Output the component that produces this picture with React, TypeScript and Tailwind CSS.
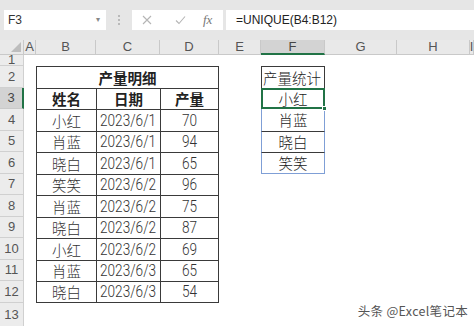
import React from "react";

const cols = ["A", "B", "C", "D", "E", "F", "G", "H", "I"];
const rowHeights = [11, 22, 21, 22, 21, 22, 21, 22, 21, 22, 21, 22, 24];

const data: [string, string, string][] = [
  ["小红", "2023/6/1", "70"],
  ["肖蓝", "2023/6/1", "94"],
  ["晓白", "2023/6/1", "65"],
  ["笑笑", "2023/6/2", "96"],
  ["肖蓝", "2023/6/2", "75"],
  ["晓白", "2023/6/2", "87"],
  ["小红", "2023/6/2", "69"],
  ["肖蓝", "2023/6/3", "65"],
  ["晓白", "2023/6/3", "54"],
];
const uniq = ["小红", "肖蓝", "晓白", "笑笑"];

const cjk = "font-['Noto_Sans_CJK_SC',sans-serif] font-light";
const cjkBold = "font-['Noto_Sans_CJK_SC',sans-serif] font-bold";

export default function App() {
  const gridRows = `15px ${rowHeights.map((h) => h + "px").join(" ")}`;
  return (
    <div className="w-[474px] h-[326px] overflow-hidden bg-white flex flex-col font-['Liberation_Sans',sans-serif]">
      {/* formula bar */}
      <div className="h-[40px] bg-[#e6e6e6] flex items-center shrink-0">
        <div className="ml-[4px] w-[102px] h-[20px] bg-white flex items-center justify-between px-[4px]">
          <span className="text-[12px] text-[#333]">F3</span>
          <span className="text-[8px] text-[#888] mr-[2px]">▾</span>
        </div>
        <div className="w-[26px] flex flex-col items-center gap-[2px]">
          <span className="w-[2px] h-[2px] bg-[#aaa] rounded-full" />
          <span className="w-[2px] h-[2px] bg-[#aaa] rounded-full" />
          <span className="w-[2px] h-[2px] bg-[#aaa] rounded-full" />
        </div>
        <div className="w-[91px] h-[20px] bg-white flex items-center">
          <svg width="10" height="10" viewBox="0 0 10 10" className="ml-[10px]">
            <path d="M1 1L9 9M9 1L1 9" stroke="#b5b5b5" strokeWidth="1.1" />
          </svg>
          <svg width="11" height="10" viewBox="0 0 11 10" className="ml-[23px]">
            <path d="M1 5.5L4 8.5L10 1.5" stroke="#b5b5b5" strokeWidth="1.1" fill="none" />
          </svg>
          <span className="ml-[17px] text-[13px] italic text-[#777] font-['Liberation_Serif',serif]">fx</span>
        </div>
        <div className="ml-[3px] flex-1 h-[20px] bg-white flex items-center pl-[10px]">
          <span className="text-[12px] text-[#222]">=UNIQUE(B4:B12)</span>
        </div>
      </div>

      {/* sheet */}
      <div
        className="grid relative"
        style={{
          gridTemplateColumns: "24px 12px 60px 64px 59px 42px 64px 72px 73px 4px",
          gridTemplateRows: gridRows,
        }}
      >
        {/* corner */}
        <div className="bg-[#e9e9e9] border-r border-b border-[#c9c9c9] flex items-end justify-end p-[2px]">
          <svg width="10" height="10" viewBox="0 0 10 10">
            <path d="M10 0L10 10L0 10Z" fill="#bdbdbd" />
          </svg>
        </div>
        {cols.map((c) => (
          <div
            key={c}
            className={
              c === "F"
                ? "bg-[#d3d3d3] border-r border-[#c9c9c9] border-b-2 border-b-[#217346] text-[13px] text-[#444] flex items-center justify-center"
                : "bg-[#e9e9e9] border-r border-b border-[#c9c9c9] text-[13px] text-[#555] flex items-center justify-center"
            }
          >
            {c}
          </div>
        ))}

        {rowHeights.map((_, ri) => {
          const r = ri + 1;
          const cells: React.ReactNode[] = [];
          cells.push(
            <div
              key={`h${r}`}
              className={
                r === 3
                  ? "bg-[#d3d3d3] border-r-2 border-r-[#217346] border-b border-[#c9c9c9] text-[13px] text-[#444] flex items-center justify-center"
                  : "bg-[#ececec] border-r border-b border-[#d0d0d0] text-[13px] text-[#555] flex items-center justify-center"
              }
            >
              {r}
            </div>
          );
          // A
          cells.push(<div key={`a${r}`} />);
          // B-D
          if (r === 2) {
            cells.push(
              <div
                key="title"
                className={`col-span-3 border border-b-0 border-[#3a3a3a] flex items-center justify-center text-[14.5px] text-[#222] ${cjkBold}`}
              >
                产量明细
              </div>
            );
          } else if (r === 3) {
            ["姓名", "日期", "产量"].forEach((t, i) =>
              cells.push(
                <div
                  key={`hd${i}`}
                  className={`border-l border-t border-[#3a3a3a] ${i === 2 ? "border-r" : ""} flex items-center justify-center text-[14.5px] text-[#222] ${cjkBold}`}
                >
                  {t}
                </div>
              )
            );
          } else if (r >= 4 && r <= 12) {
            const d = data[r - 4];
            d.forEach((t, i) =>
              cells.push(
                <div
                  key={`d${i}`}
                  className={`border-l border-t border-[#3a3a3a] ${i === 2 ? "border-r" : ""} ${r === 12 ? "border-b" : ""} flex items-center justify-center text-[#333] ${i === 0 ? `text-[14.5px] ${cjk}` : "text-[17px]"}`}
                >
                  {i === 0 ? (
                    t
                  ) : (
                    <span className="inline-block scale-x-[0.8] whitespace-nowrap text-[#333] font-['Roboto',sans-serif] font-light">{t}</span>
                  )}
                </div>
              )
            );
          } else {
            cells.push(<div key="b" />, <div key="c" />, <div key="d" />);
          }
          // E
          cells.push(<div key={`e${r}`} />);
          // F
          if (r === 2) {
            cells.push(
              <div
                key="f2"
                className={`border border-b-0 border-[#3a3a3a] flex items-center pl-[1px] text-[14.5px] text-[#222] whitespace-nowrap ${cjk}`}
              >
                产量统计
              </div>
            );
          } else if (r >= 3 && r <= 6) {
            const sel = r === 3;
            cells.push(
              <div
                key={`f${r}`}
                className={
                  sel
                    ? `relative border-2 border-[#217346] flex items-center justify-center text-[14.5px] text-[#222] ${cjk}`
                    : `border-l border-r border-[#7f9fd6] ${r === 4 ? "" : "border-t border-t-[#3a3a3a]"} ${r === 6 ? "border-b border-b-[#7f9fd6]" : ""} flex items-center justify-center text-[14.5px] text-[#222] ${cjk}`
                }
              >
                {uniq[r - 3]}
                {sel && (
                  <span className="absolute right-[-4px] bottom-[-4px] w-[5px] h-[5px] bg-[#217346] border border-white" />
                )}
              </div>
            );
          } else {
            cells.push(<div key={`f${r}`} />);
          }
          cells.push(<div key={`g${r}`} />, <div key={`hh${r}`} />, <div key={`i${r}`} />);
          return <React.Fragment key={r}>{cells}</React.Fragment>;
        })}

        <div className="absolute right-[6px] bottom-[6px] text-[12.5px] tracking-[0.3px] text-[#555] font-['Noto_Sans_CJK_SC',sans-serif] [text-shadow:0_0_2px_#fff]">
          头条 @Excel笔记本
        </div>
      </div>
    </div>
  );
}
